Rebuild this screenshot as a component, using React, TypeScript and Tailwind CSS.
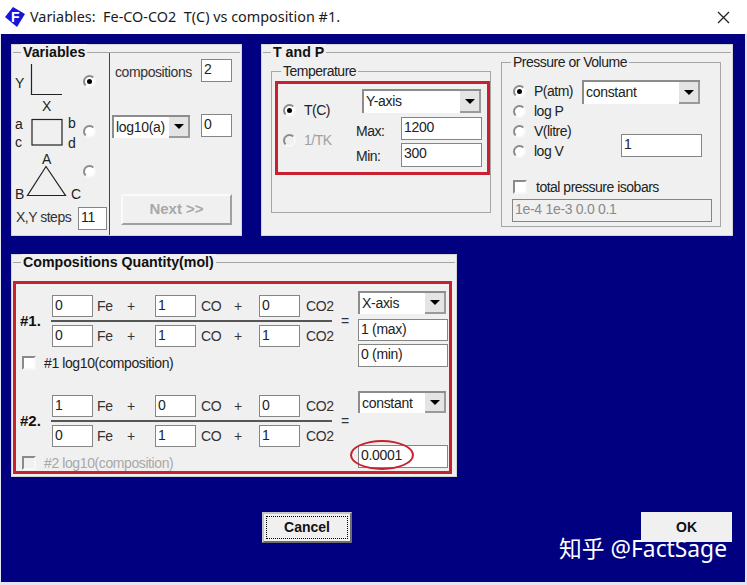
import type { ReactNode } from 'react'

const ui = "font-['Liberation_Sans',Arial,sans-serif]"

function Panel({ title, className, children }: { title: string; className: string; children: ReactNode }) {
    return (
        <div className={`relative bg-[#f0f0f0] border border-[#d4d4d4] px-[1px] pt-[7px] ${className}`}>
            <div className="h-full border-t border-[#a6a6a6]">{children}</div>
            <span className="absolute left-[9px] top-[-1px] bg-[#f0f0f0] px-[2px] text-[14.2px] leading-[17px] font-bold text-[#111]">
                {title}
            </span>
        </div>
    )
}

function Group({ title, className, children }: { title: string; className: string; children: ReactNode }) {
    return (
        <div className={`relative border border-[#a6a6a6] ${className}`}>
            {children}
            <span className="absolute left-[9px] top-[-9px] bg-[#f0f0f0] px-[2px] text-[14px] tracking-[-0.5px] leading-[16px] text-[#222]">
                {title}
            </span>
        </div>
    )
}

function Field({ value, className, muted }: { value: string; className: string; muted?: boolean }) {
    return (
        <div
            className={`shrink-0 border border-[#858585] pl-[2px] text-[14px] tracking-[-0.3px] leading-[19px] ${
                muted ? 'bg-[#f0f0f0] text-[#8a8a8a]' : 'bg-white text-[#222]'
            } ${className}`}
        >
            {value}
        </div>
    )
}

function Select({ value, className }: { value: string; className: string }) {
    return (
        <div className={`flex bg-white border-l-2 border-t-2 border-[#8c8c8c] text-[14px] tracking-[-0.3px] text-[#222] ${className}`}>
            <span className="flex-1 pl-[2px] leading-[20px]">{value}</span>
            <span className="flex w-[21px] items-center justify-center bg-[#e4e4e4] border-r-2 border-b-2 border-[#9a9a9a]">
                <span className="h-0 w-0 border-x-[5px] border-t-[5px] border-x-transparent border-t-black" />
            </span>
        </div>
    )
}

function Radio({ checked, disabled, className }: { checked?: boolean; disabled?: boolean; className?: string }) {
    return (
        <span
            className={`flex h-[13px] w-[13px] shrink-0 items-center justify-center rounded-full border-2 border-t-[#8a8a8a] border-l-[#8a8a8a] border-r-[#f8f8f8] border-b-[#f8f8f8] ${
                disabled ? 'bg-[#f0f0f0]' : 'bg-white'
            } ${className ?? ''}`}
        >
            {checked && <span className="h-[5px] w-[5px] rounded-full bg-black" />}
        </span>
    )
}

function Check({ disabled }: { disabled?: boolean }) {
    return (
        <span
            className={`h-[14px] w-[14px] shrink-0 border-2 border-t-[#8a8a8a] border-l-[#8a8a8a] border-r-[#f8f8f8] border-b-[#f8f8f8] ${
                disabled ? 'bg-[#f0f0f0]' : 'bg-white'
            }`}
        />
    )
}

function RadioRow({ label, checked, disabled, className }: { label: string; checked?: boolean; disabled?: boolean; className?: string }) {
    return (
        <div className={`flex h-[20px] items-center text-[14px] tracking-[-0.5px] ${disabled ? 'text-[#a0a0a0]' : 'text-[#222]'} ${className ?? ''}`}>
            <Radio checked={checked} disabled={disabled} />
            <span className="ml-[8px]">{label}</span>
        </div>
    )
}

function Terms({ a, b, c }: { a: string; b: string; c: string }) {
    return (
        <div className="flex h-[22px] items-center text-[14px] tracking-[-0.4px] text-[#333]">
            <Field value={a} className="ml-[1px] h-[22px] w-[41px]" />
            <span className="ml-[4px] w-[26px] shrink-0">Fe</span>
            <span className="w-[16px] shrink-0 text-center">+</span>
            <Field value={b} className="ml-[16px] h-[22px] w-[41px]" />
            <span className="ml-[5px] w-[29px] shrink-0">CO</span>
            <span className="w-[16px] shrink-0 text-center">+</span>
            <Field value={c} className="ml-[13px] h-[22px] w-[41px]" />
            <span className="ml-[6px] whitespace-nowrap">CO2</span>
        </div>
    )
}

function Formula({ label, top, bottom }: { label: string; top: string[]; bottom: string[] }) {
    return (
        <div className="mt-[11px] flex h-[52px] items-center">
            <span className="w-[35px] pl-[4px] text-[15px] font-bold text-[#111]">{label}</span>
            <div className="w-[281px]">
                <Terms a={top[0]} b={top[1]} c={top[2]} />
                <div className="my-[3px] h-[2px] bg-[#555]" />
                <Terms a={bottom[0]} b={bottom[1]} c={bottom[2]} />
            </div>
            <span className="w-[26px] text-center text-[14px] text-[#333]">=</span>
        </div>
    )
}

function LogCheck({ label, disabled }: { label: string; disabled?: boolean }) {
    return (
        <div className={`ml-[6px] mt-[9px] flex h-[14px] items-center text-[14px] tracking-[-0.4px] ${disabled ? 'text-[#a8a8a8]' : 'text-[#222]'}`}>
            <Check disabled={disabled} />
            <span className="ml-[8px]">{label}</span>
        </div>
    )
}

function AxesDiagram() {
    return (
        <svg width="70" height="150" viewBox="13 53 70 150" className="shrink-0 text-[14px]" fill="#222">
            <g fill="none" stroke="#222" strokeWidth="1.2">
                <path d="M31.5 64V94.5H62" />
                <rect x="32" y="119.5" width="30" height="25.5" />
                <path d="M46 166.5L65.5 195.5H27.5Z" />
            </g>
            <text x="15" y="88">Y</text>
            <text x="42" y="111">X</text>
            <text x="15" y="129">a</text>
            <text x="68" y="128">b</text>
            <text x="15" y="147">c</text>
            <text x="68" y="148">d</text>
            <text x="42" y="164">A</text>
            <text x="15" y="199">B</text>
            <text x="71" y="199">C</text>
        </svg>
    )
}

function TitleIcon() {
    return (
        <svg width="22" height="22" viewBox="0 0 22 22" className="ml-[4px] shrink-0">
            <path d="M9 1L21 8L13 21L1 11Z" fill="#1616d8" />
            <text x="7" y="16" fontSize="14" fontWeight="bold" fill="#fff" fontFamily="Liberation Sans">F</text>
        </svg>
    )
}

export default function App() {
    return (
        <div className={`relative flex h-[585px] w-[747px] flex-col overflow-hidden bg-[#e2e6f2] ${ui}`}>
            <div className="flex h-[34px] items-center bg-white">
                <TitleIcon />
                <span className="ml-[4px] whitespace-pre font-['Noto_Sans',sans-serif] text-[14.4px] text-[#1a1a1a]">
                    {'Variables:  Fe-CO-CO2  T(C) vs composition #1.'}
                </span>
                <svg width="13" height="13" viewBox="0 0 13 13" className="ml-auto mr-[17px]" stroke="#222" strokeWidth="1.3">
                    <path d="M1 1L12 12M12 1L1 12" />
                </svg>
            </div>

            <div className="ml-[1px] mr-[2px] h-[548px] bg-[#000080] pl-[10px] pt-[10px]">
                <div className="flex items-start gap-[19px]">
                    <Panel title="Variables" className="h-[192px] w-[231px]">
                        <div className="flex h-full">
                            <div className="w-[97px] border-r border-[#444]">
                                <div className="flex">
                                    <AxesDiagram />
                                    <div>
                                        <Radio checked className="mt-[22px]" />
                                        <Radio className="mt-[37px]" />
                                        <Radio className="mt-[27px]" />
                                    </div>
                                </div>
                                <div className="mt-[4px] flex items-center text-[14px] tracking-[-0.5px] text-[#333]">
                                    <span className="mb-[3px] ml-[3px] w-[62px] whitespace-nowrap leading-[17px]">X,Y steps</span>
                                    <Field value="11" className="h-[23px] w-[29px]" />
                                </div>
                            </div>
                            <div className="flex-1">
                                <div className="mt-[6px] flex h-[23px] items-center pl-[5px] text-[14px] tracking-[-0.4px] text-[#333]">
                                    <span className="mt-[4px] w-[86px] leading-[17px]">compositions</span>
                                    <Field value="2" className="h-[23px] w-[31px]" />
                                </div>
                                <div className="mt-[32px] flex items-start pl-[2px]">
                                    <Select value="log10(a)" className="mt-[1px] h-[23px] w-[78px]" />
                                    <Field value="0" className="ml-[11px] h-[23px] w-[31px]" />
                                </div>
                                <div className="ml-[11px] mt-[56px] flex h-[31px] w-[111px] items-center justify-center border-2 border-t-[#fafafa] border-l-[#fafafa] border-r-[#a0a0a0] border-b-[#a0a0a0] text-[15px] font-bold text-[#a8a8a8]">
                                    {'Next >>'}
                                </div>
                            </div>
                        </div>
                    </Panel>

                    <Panel title="T and P" className="h-[192px] w-[472px]">
                        <div className="flex items-start">
                            <Group title="Temperature" className="ml-[8px] mt-[18px] h-[142px] w-[220px]">
                                <div className="ml-[3px] mt-[9px] flex h-[94px] w-[215px] border-[3px] border-[#c8202f]">
                                    <div className="w-[78px] pl-[5px] pt-[16px]">
                                        <RadioRow label="T(C)" checked />
                                        <RadioRow label="1/TK" disabled className="mt-[10px]" />
                                    </div>
                                    <div className="pt-[5px] text-[14px] tracking-[-0.5px] text-[#222]">
                                        <Select value="Y-axis" className="ml-[6px] h-[24px] w-[119px]" />
                                        <div className="mt-[4px] flex h-[23px] items-center">
                                            <span className="mt-[6px] w-[45px] leading-[17px]">Max:</span>
                                            <Field value="1200" className="h-[23px] w-[81px]" />
                                        </div>
                                        <div className="mt-[3px] flex h-[24px] items-center">
                                            <span className="mt-[2px] w-[45px] leading-[17px]">Min:</span>
                                            <Field value="300" className="h-[24px] w-[81px]" />
                                        </div>
                                    </div>
                                </div>
                            </Group>

                            <Group title="Pressure or Volume" className="ml-[10px] mt-[9px] h-[165px] w-[220px]">
                                <div className="flex h-[98px]">
                                    <div className="ml-[11px] mt-[18px] w-[69px]">
                                        <RadioRow label="P(atm)" checked />
                                        <RadioRow label="log P" />
                                        <RadioRow label="V(litre)" />
                                        <RadioRow label="log V" />
                                    </div>
                                    <div>
                                        <Select value="constant" className="mt-[17px] h-[24px] w-[118px]" />
                                        <Field value="1" className="ml-[39px] mt-[30px] h-[23px] w-[81px]" />
                                    </div>
                                </div>
                                <div className="ml-[11px] mt-[19px] flex h-[14px] items-center text-[14px] tracking-[-0.5px] text-[#222]">
                                    <Check />
                                    <span className="ml-[9px]">total pressure isobars</span>
                                </div>
                                <Field value="1e-4 1e-3 0.0 0.1" muted className="ml-[10px] mt-[5px] h-[23px] w-[200px]" />
                            </Group>
                        </div>
                    </Panel>
                </div>

                <Panel title="Compositions Quantity(mol)" className="mt-[18px] h-[223px] w-[446px]">
                    <div className="mt-[18px] h-[193px] w-[439px] border-[3px] border-[#c8202f]">
                        <div className="flex h-[86px]">
                            <div className="w-[342px]">
                                <Formula label="#1." top={['0', '1', '0']} bottom={['0', '1', '1']} />
                                <LogCheck label="#1 log10(composition)" />
                            </div>
                            <div className="w-[90px] pt-[7px]">
                                <Select value="X-axis" className="h-[23px] w-[88px]" />
                                <Field value="1 (max)" className="mt-[5px] h-[22px] w-[90px]" />
                                <Field value="0 (min)" className="mt-[3px] h-[23px] w-[90px]" />
                            </div>
                        </div>
                        <div className="mt-[14px] flex">
                            <div className="w-[342px]">
                                <Formula label="#2." top={['1', '0', '0']} bottom={['0', '1', '1']} />
                                <LogCheck label="#2 log10(composition)" disabled />
                            </div>
                            <div className="w-[90px] pt-[7px]">
                                <Select value="constant" className="h-[22px] w-[88px]" />
                                <div className="relative mt-[32px]">
                                    <Field value="0.0001" className="h-[23px] w-[90px]" />
                                    <span className="absolute left-[-8px] top-[-5px] h-[30px] w-[64px] rounded-[50%] border-2 border-[#c8202f]" />
                                </div>
                            </div>
                        </div>
                    </div>
                </Panel>

                <div className="mt-[35px] flex items-start text-[14px] font-bold text-[#111]">
                    <div className="ml-[251px] flex h-[31px] w-[90px] items-center justify-center border-2 border-t-[#c4c4c4] border-l-[#c4c4c4] border-r-[#6e6e6e] border-b-[#6e6e6e] bg-[#f0f0f0] p-[2px]">
                        <span className="flex h-full w-full items-center justify-center border border-dotted border-black">Cancel</span>
                    </div>
                    <div className="ml-[289px] flex h-[30px] w-[91px] items-center justify-center bg-[#f0f0f0]">OK</div>
                </div>
            </div>

            <span className="absolute left-[559px] top-[534px] font-['Noto_Sans','Noto_Sans_CJK_SC',sans-serif] text-[22.8px] leading-[30px] text-white">
                知乎 @FactSage
            </span>
        </div>
    )
}
